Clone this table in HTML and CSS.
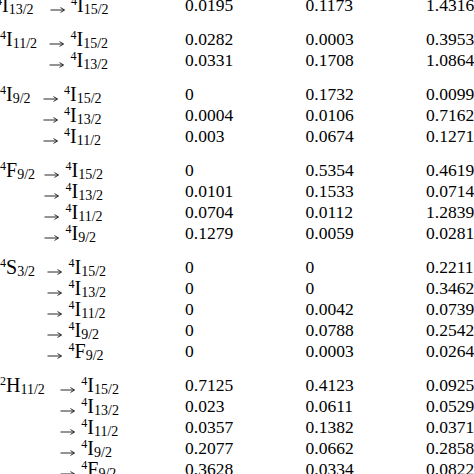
FILE: index.html
```html
<!DOCTYPE html>
<html>
<head>
<meta charset="utf-8">
<link rel="stylesheet" href="styles.css">
</head>
<body>
<div class="table">
  <div class="group">
    <div class="init first"><sup>4</sup><span class="m">I</span><sub>13/2</sub></div>
    <div class="tr"><svg class="ar" viewBox="0 0 15 8" width="15" height="8"><path d="M0.5 4H14M10.5 1.6L14.6 4L10.5 6.4"/></svg><sup>4</sup><span class="m">I</span><sub>15/2</sub></div>
    <div class="num">0.0195</div><div class="num">0.1173</div><div class="num">1.4316</div>
  </div>
  <div class="group">
    <div class="init"><sup>4</sup><span class="m">I</span><sub>11/2</sub></div>
    <div class="tr"><svg class="ar" viewBox="0 0 15 8" width="15" height="8"><path d="M0.5 4H14M10.5 1.6L14.6 4L10.5 6.4"/></svg><sup>4</sup><span class="m">I</span><sub>15/2</sub></div>
    <div class="num">0.0282</div><div class="num">0.0003</div><div class="num">0.3953</div>
    <div class="tr"><svg class="ar" viewBox="0 0 15 8" width="15" height="8"><path d="M0.5 4H14M10.5 1.6L14.6 4L10.5 6.4"/></svg><sup>4</sup><span class="m">I</span><sub>13/2</sub></div>
    <div class="num">0.0331</div><div class="num">0.1708</div><div class="num">1.0864</div>
  </div>
  <div class="group">
    <div class="init"><sup>4</sup><span class="m">I</span><sub>9/2</sub></div>
    <div class="tr"><svg class="ar" viewBox="0 0 15 8" width="15" height="8"><path d="M0.5 4H14M10.5 1.6L14.6 4L10.5 6.4"/></svg><sup>4</sup><span class="m">I</span><sub>15/2</sub></div>
    <div class="num">0</div><div class="num">0.1732</div><div class="num">0.0099</div>
    <div class="tr"><svg class="ar" viewBox="0 0 15 8" width="15" height="8"><path d="M0.5 4H14M10.5 1.6L14.6 4L10.5 6.4"/></svg><sup>4</sup><span class="m">I</span><sub>13/2</sub></div>
    <div class="num">0.0004</div><div class="num">0.0106</div><div class="num">0.7162</div>
    <div class="tr"><svg class="ar" viewBox="0 0 15 8" width="15" height="8"><path d="M0.5 4H14M10.5 1.6L14.6 4L10.5 6.4"/></svg><sup>4</sup><span class="m">I</span><sub>11/2</sub></div>
    <div class="num">0.003</div><div class="num">0.0674</div><div class="num">0.1271</div>
  </div>
  <div class="group">
    <div class="init narrow"><sup>4</sup><span class="m">F</span><sub>9/2</sub></div>
    <div class="tr"><svg class="ar" viewBox="0 0 15 8" width="15" height="8"><path d="M0.5 4H14M10.5 1.6L14.6 4L10.5 6.4"/></svg><sup>4</sup><span class="m">I</span><sub>15/2</sub></div>
    <div class="num">0</div><div class="num">0.5354</div><div class="num">0.4619</div>
    <div class="tr"><svg class="ar" viewBox="0 0 15 8" width="15" height="8"><path d="M0.5 4H14M10.5 1.6L14.6 4L10.5 6.4"/></svg><sup>4</sup><span class="m">I</span><sub>13/2</sub></div>
    <div class="num">0.0101</div><div class="num">0.1533</div><div class="num">0.0714</div>
    <div class="tr"><svg class="ar" viewBox="0 0 15 8" width="15" height="8"><path d="M0.5 4H14M10.5 1.6L14.6 4L10.5 6.4"/></svg><sup>4</sup><span class="m">I</span><sub>11/2</sub></div>
    <div class="num">0.0704</div><div class="num">0.0112</div><div class="num">1.2839</div>
    <div class="tr"><svg class="ar" viewBox="0 0 15 8" width="15" height="8"><path d="M0.5 4H14M10.5 1.6L14.6 4L10.5 6.4"/></svg><sup>4</sup><span class="m">I</span><sub>9/2</sub></div>
    <div class="num">0.1279</div><div class="num">0.0059</div><div class="num">0.0281</div>
  </div>
  <div class="group">
    <div class="init"><sup>4</sup><span class="m">S</span><sub>3/2</sub></div>
    <div class="tr"><svg class="ar" viewBox="0 0 15 8" width="15" height="8"><path d="M0.5 4H14M10.5 1.6L14.6 4L10.5 6.4"/></svg><sup>4</sup><span class="m">I</span><sub>15/2</sub></div>
    <div class="num">0</div><div class="num">0</div><div class="num">0.2211</div>
    <div class="tr"><svg class="ar" viewBox="0 0 15 8" width="15" height="8"><path d="M0.5 4H14M10.5 1.6L14.6 4L10.5 6.4"/></svg><sup>4</sup><span class="m">I</span><sub>13/2</sub></div>
    <div class="num">0</div><div class="num">0</div><div class="num">0.3462</div>
    <div class="tr"><svg class="ar" viewBox="0 0 15 8" width="15" height="8"><path d="M0.5 4H14M10.5 1.6L14.6 4L10.5 6.4"/></svg><sup>4</sup><span class="m">I</span><sub>11/2</sub></div>
    <div class="num">0</div><div class="num">0.0042</div><div class="num">0.0739</div>
    <div class="tr"><svg class="ar" viewBox="0 0 15 8" width="15" height="8"><path d="M0.5 4H14M10.5 1.6L14.6 4L10.5 6.4"/></svg><sup>4</sup><span class="m">I</span><sub>9/2</sub></div>
    <div class="num">0</div><div class="num">0.0788</div><div class="num">0.2542</div>
    <div class="tr"><svg class="ar" viewBox="0 0 15 8" width="15" height="8"><path d="M0.5 4H14M10.5 1.6L14.6 4L10.5 6.4"/></svg><sup>4</sup><span class="m">F</span><sub>9/2</sub></div>
    <div class="num">0</div><div class="num">0.0003</div><div class="num">0.0264</div>
  </div>
  <div class="group">
    <div class="init wide"><sup>2</sup><span class="m">H</span><sub>11/2</sub></div>
    <div class="tr"><svg class="ar" viewBox="0 0 15 8" width="15" height="8"><path d="M0.5 4H14M10.5 1.6L14.6 4L10.5 6.4"/></svg><sup>4</sup><span class="m">I</span><sub>15/2</sub></div>
    <div class="num">0.7125</div><div class="num">0.4123</div><div class="num">0.0925</div>
    <div class="tr"><svg class="ar" viewBox="0 0 15 8" width="15" height="8"><path d="M0.5 4H14M10.5 1.6L14.6 4L10.5 6.4"/></svg><sup>4</sup><span class="m">I</span><sub>13/2</sub></div>
    <div class="num">0.023</div><div class="num">0.0611</div><div class="num">0.0529</div>
    <div class="tr"><svg class="ar" viewBox="0 0 15 8" width="15" height="8"><path d="M0.5 4H14M10.5 1.6L14.6 4L10.5 6.4"/></svg><sup>4</sup><span class="m">I</span><sub>11/2</sub></div>
    <div class="num">0.0357</div><div class="num">0.1382</div><div class="num">0.0371</div>
    <div class="tr"><svg class="ar" viewBox="0 0 15 8" width="15" height="8"><path d="M0.5 4H14M10.5 1.6L14.6 4L10.5 6.4"/></svg><sup>4</sup><span class="m">I</span><sub>9/2</sub></div>
    <div class="num">0.2077</div><div class="num">0.0662</div><div class="num">0.2858</div>
    <div class="tr"><svg class="ar" viewBox="0 0 15 8" width="15" height="8"><path d="M0.5 4H14M10.5 1.6L14.6 4L10.5 6.4"/></svg><sup>4</sup><span class="m">F</span><sub>9/2</sub></div>
    <div class="num">0.3628</div><div class="num">0.0334</div><div class="num">0.0822</div>
  </div>
</div>
</body>
</html>
```
FILE: styles.css
```css
html, body {
  margin: 0;
  padding: 0;
  background: #fff;
  overflow: hidden;
  width: 474px;
  height: 474px;
}
.table {
  margin-top: -5px;
  color: #000;
  font-family: "Liberation Serif", "Times New Roman", serif;
}
.group {
  display: grid;
  grid-template-columns: max-content 1fr 120.5px 120.5px 100px;
  grid-auto-rows: 21px;
  width: 526px;
  margin-bottom: 13px;
}
.init {
  grid-column: 1;
  font-size: 20px;
  line-height: 21px;
  padding-right: 12px;
  white-space: nowrap;
}
.init.first {
  margin-left: -4px;
  padding-right: 16px;
}
.init.narrow {
  padding-right: 9px;
}
.init.wide {
  padding-right: 15px;
}
.tr {
  grid-column: 2;
  font-size: 20px;
  line-height: 21px;
  white-space: nowrap;
}
.num {
  font-size: 17.5px;
  line-height: 21px;
  white-space: nowrap;
}
.m {
  font-size: 20px;
}
sup {
  font-size: 12px;
  line-height: 0;
  vertical-align: 7.5px;
}
sub {
  font-size: 14px;
  line-height: 0;
  vertical-align: -2px;
}
.ar {
  vertical-align: -1.5px;
  margin-right: 6.5px;
  fill: none;
  stroke: #111;
  stroke-width: 0.9;
}
```
